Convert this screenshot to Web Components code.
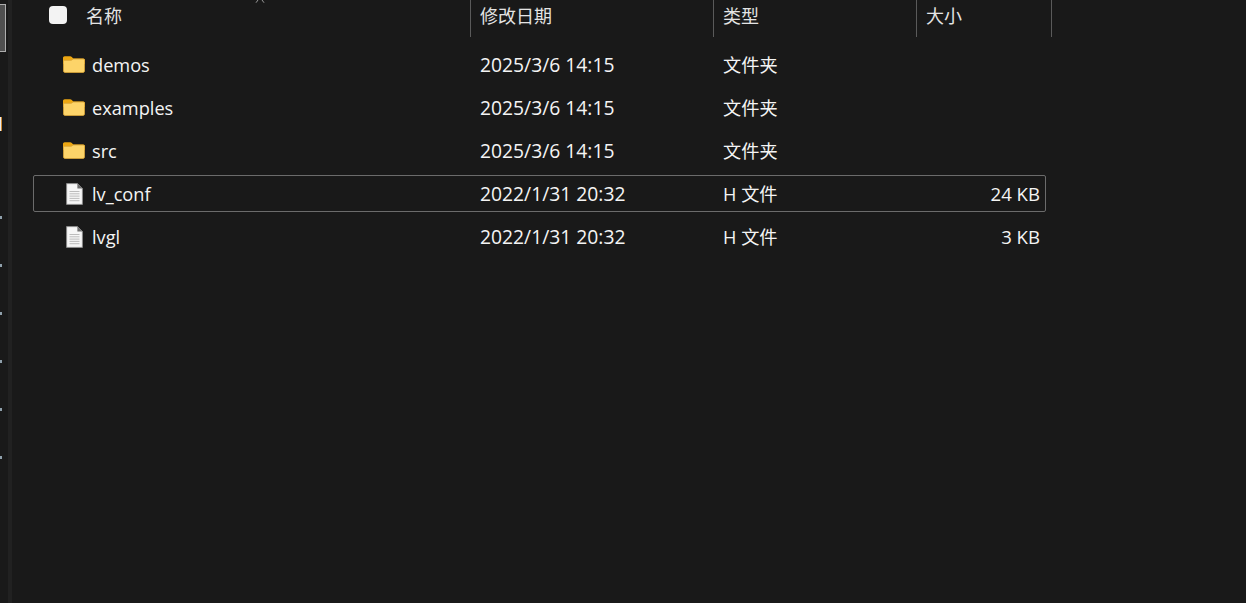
<!DOCTYPE html>
<html lang="zh">
<head>
<meta charset="utf-8">
<title>lvgl</title>
<style>
html, body { margin: 0; height: 100%; background: #191919; overflow: hidden; }
</style>
</head>
<body>
<explorer-view>
	<file-header></file-header>
	<file-row kind="folder" name="demos" date="2025/3/6 14:15" type="文件夹"></file-row>
	<file-row kind="folder" name="examples" date="2025/3/6 14:15" type="文件夹"></file-row>
	<file-row kind="folder" name="src" date="2025/3/6 14:15" type="文件夹"></file-row>
	<file-row kind="file" name="lv_conf" date="2022/1/31 20:32" type="H 文件" size="24 KB" selected></file-row>
	<file-row kind="file" name="lvgl" date="2022/1/31 20:32" type="H 文件" size="3 KB"></file-row>
</explorer-view>

<script>
const FONT = '"Open Sans", "Noto Sans CJK SC", sans-serif';

const ICONS = {
	folder: `<svg width="22" height="17" viewBox="0 0 22 17">
		<path d="M0 2C0 1 .7.300 1.700.300h5.500c.5 0 1 .2 1.300.5L10.300 2.500H20.300c.9 0 1.700.8 1.700 1.700V8H0z" fill="#eda712"/>
		<path d="M.5 5.300c0-.6.5-1 1-1h6.700l2.200-1.300h9.900c.7 0 1.200.5 1.200 1.200v10.900c0 .8-.6 1.400-1.400 1.400H1.900c-.8 0-1.400-.6-1.400-1.400z" fill="var(--folder-fill)" stroke="#d9a437" stroke-width=".8"/>
	</svg>`,
	file: `<svg width="17" height="22" viewBox="0 0 17 22">
		<path d="M.6.600h10.800l5 5v15.800H.6z" fill="#f6f6f6" stroke="#8b8b8b"/>
		<path d="M11.400.600v5h5z" fill="#6f6f6f"/>
		<path d="M3.500 8.500h10M3.500 10.800h10M3.500 13.100h10M3.500 15.400h10M3.500 17.700h10" stroke="#bcbcbc" stroke-width="1"/>
	</svg>`
};

// Left edge of the window, what is left of the navigation pane
customElements.define('side-gutter', class extends HTMLElement {
	constructor() {
		super();
		this.attachShadow({ mode: 'open' }).innerHTML = `<style>
:host {
	display: flex;
	flex: none;
	width: 12px;
	height: 100%;
	box-sizing: border-box;
	border-right: 4px solid #212121;
	margin-right: 21px;
}
.strip { display: flex; flex-direction: column; width: 6px; }
.thumb {
	width: 100%;
	height: 48px;
	margin-top: 4px;
	box-sizing: border-box;
	background: #4f4f4f;
	border: 1px solid #adadad;
	border-left: none;
}
.mark {
	width: 1px;
	height: 14px;
	margin-top: 65px;
	background: #ececec;
	border-right: 1px solid #cf8a32;
}
.dot { width: 2px; height: 3px; margin-top: 45px; background: #8fa0ab; }
.first { margin-top: 85px; }
</style>
<div class="strip">
	<div class="thumb"></div>
	<div class="mark"></div>
	<div class="dot first"></div>
	<div class="dot"></div>
	<div class="dot"></div>
	<div class="dot"></div>
	<div class="dot"></div>
	<div class="dot"></div>
</div>`;
	}
});

customElements.define('explorer-view', class extends HTMLElement {
	constructor() {
		super();
		this.attachShadow({ mode: 'open' }).innerHTML = `<style>
:host {
	display: flex;
	height: 603px;
	background: #191919;
	color: #f4f4f4;
	font-family: ${FONT};
	font-size: 18.200px;
}
.list { display: flex; flex-direction: column; width: 1019px; }
</style>
<side-gutter></side-gutter>
<div class="list"><slot></slot></div>`;
	}
});

customElements.define('file-header', class extends HTMLElement {
	constructor() {
		super();
		this.attachShadow({ mode: 'open' }).innerHTML = `<style>
:host {
	position: relative;
	display: grid;
	grid-template-columns: 437px 243px 203px 136px;
	height: 37px;
	margin-bottom: 9px;
	color: #e4e4e4;
	font-size: 18px;
}
.cell {
	display: flex;
	align-items: center;
	box-sizing: border-box;
	height: 37px;
	padding: 0 0 8px 9px;
	border-left: 1px solid #5a5a5a;
}
.size { border-right: 1px solid #5a5a5a; }
.name { border-left: none; padding-left: 16px; }
.check {
	width: 18px;
	height: 18px;
	margin-right: 19px;
	border-radius: 4px;
	background: #f3f3f3;
}
/* bottom of a clipped glyph from the pane above */
.clip { position: absolute; left: 222px; top: 0; }
</style>
<div class="cell name"><span class="check"></span>名称</div>
<div class="cell">修改日期</div>
<div class="cell">类型</div>
<div class="cell size">大小</div>
<svg class="clip" width="10" height="3" viewBox="0 0 10 3"><path d="M3 0 1 2.700M7 0l2 2.700" fill="none" stroke="#9a9a9a"/></svg>`;
	}
});

customElements.define('file-row', class extends HTMLElement {
	constructor() {
		super();
		this.attachShadow({ mode: 'open' }).innerHTML = `<style>
:host {
	--folder-fill: #fdd469;
	display: grid;
	grid-template-columns: 437px 243px 203px 130px;
	align-items: center;
	width: 1013px;
	height: 37px;
	margin-bottom: 6px;
	box-sizing: border-box;
	border: 1px solid transparent;
	border-radius: 2px;
}
:host([selected]) { border-color: #6b6b6b; }
.name { display: flex; align-items: center; padding-left: 29px; }
.icon { display: flex; justify-content: center; width: 22px; margin-right: 7px; }
.cell { padding-left: 9px; }
.date { font-size: 19.300px; }
.type { padding-bottom: 2px; }
.size { text-align: right; padding-right: 7px; font-size: 18.600px; }
svg { display: block; }
</style>
<div class="name"><span class="icon"></span><span class="label"></span></div>
<div class="cell date"></div>
<div class="cell type"></div>
<div class="cell size"></div>`;
	}

	connectedCallback() {
		const root = this.shadowRoot;
		root.querySelector('.icon').innerHTML = ICONS[this.getAttribute('kind')];
		root.querySelector('.label').textContent = this.getAttribute('name');
		root.querySelector('.date').textContent = this.getAttribute('date');
		root.querySelector('.type').textContent = this.getAttribute('type');
		root.querySelector('.size').textContent = this.getAttribute('size') || '';
	}
});
</script>
</body>
</html>
